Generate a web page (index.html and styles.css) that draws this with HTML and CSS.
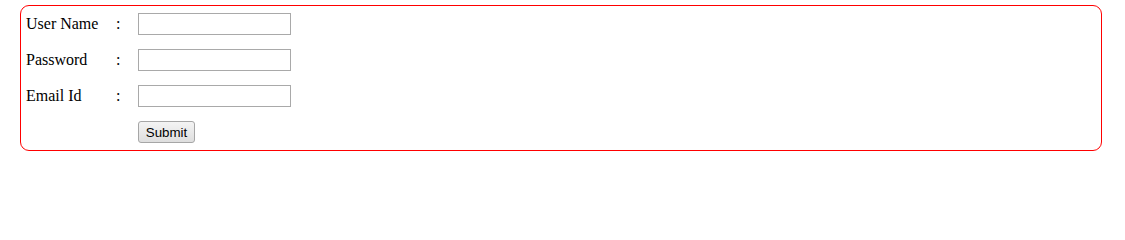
FILE: index.html
```html
<!DOCTYPE html>
<html>
<head>
<meta charset="utf-8">
<link rel="stylesheet" href="styles.css">
</head>
<body>
<form class="box">
  <div class="label">User Name</div><div class="colon">:</div><div class="field"><input class="text" type="text"></div>
  <div class="label">Password</div><div class="colon">:</div><div class="field"><input class="text" type="password"></div>
  <div class="label">Email Id</div><div class="colon">:</div><div class="field"><input class="text" type="text"></div>
  <div class="label"></div><div class="colon"></div><div class="field"><button class="submit" type="button">Submit</button></div>
</form>
</body>
</html>
```
FILE: styles.css
```css
html, body {
  margin: 0;
  padding: 0;
  background: #fff;
}
body {
  font-family: "Liberation Serif", "Times New Roman", serif;
  font-size: 16px;
  color: #000;
}
.box {
  margin: 5px 23px 0 20px;
  border: 1px solid #ff0000;
  border-radius: 9px;
  padding: 7px 5px;
  display: grid;
  grid-template-columns: 90px 22px 1fr;
  grid-auto-rows: 22px;
  row-gap: 14px;
  align-items: center;
}
.label, .colon {
  line-height: 22px;
  height: 22px;
}
.field {
  height: 22px;
  display: flex;
}
.text {
  box-sizing: border-box;
  width: 153px;
  height: 22px;
  margin: 0;
  border: 1px solid #a9a9a9;
  background: #fff;
  padding: 1px 2px;
  outline: none;
}
.submit {
  box-sizing: border-box;
  width: 57px;
  height: 22px;
  margin: 0;
  padding: 0;
  font-family: "Liberation Sans", Arial, sans-serif;
  font-size: 13.33px;
  color: #000;
  border: 1px solid #a6a6a6;
  border-radius: 3px;
  background: linear-gradient(#f4f4f4, #dedede);
}
```
